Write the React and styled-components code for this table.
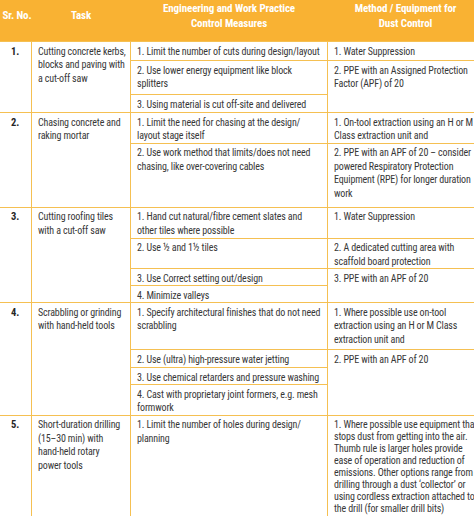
import styled, { createGlobalStyle } from 'styled-components';

const Global = createGlobalStyle`
  body {
    margin: 0;
    background: #fff;
    overflow: hidden;
  }
`;

// h = sub-row height as measured on the printed table
const rows = [
  {
    no: '1.',
    task: 'Cutting concrete kerbs,\nblocks and paving with\na cut-off saw',
    subs: [
      { h: 19, m: '1. Limit the number of cuts during design/layout', d: '1. Water Suppression' },
      { h: 34, m: '2. Use lower energy equipment like block\nsplitters', d: '2. PPE with an Assigned Protection\nFactor (APF) of 20', span: 2 },
      { h: 18, m: '3. Using material is cut off-site and delivered' },
    ],
  },
  {
    no: '2.',
    task: 'Chasing concrete and\nraking mortar',
    subs: [
      { h: 29, m: '1. Limit the need for chasing at the design/\nlayout stage itself', d: '1. On-tool extraction using an H or M\nClass extraction unit and' },
      { h: 64, m: '2. Use work method that limits/does not need\nchasing, like over-covering cables', d: '2. PPE with an APF of 20 – consider\npowered Respiratory Protection\nEquipment (RPE) for longer duration\nwork' },
    ],
  },
  {
    no: '3.',
    task: 'Cutting roofing tiles\nwith a cut-off saw',
    subs: [
      { h: 31, m: '1. Hand cut natural/fibre cement slates and\nother tiles where possible', d: '1. Water Suppression' },
      { h: 30, m: '2. Use ½ and 1½ tiles', d: '2. A dedicated cutting area with\nscaffold board protection' },
      { h: 17, m: '3. Use Correct setting out/design', d: '3. PPE with an APF of 20', span: 2 },
      { h: 17, m: '4. Minimize valleys' },
    ],
  },
  {
    no: '4.',
    task: 'Scrabbling or grinding\nwith hand-held tools',
    subs: [
      { h: 47, m: '1. Specify architectural finishes that do not need\nscrabbling', d: '1. Where possible use on-tool\nextraction using an H or M Class\nextraction unit and' },
      { h: 18, m: '2. Use (ultra) high-pressure water jetting', d: '2. PPE with an APF of 20', span: 3 },
      { h: 17, m: '3. Use chemical retarders and pressure washing' },
      { h: 30, m: '4. Cast with proprietary joint formers, e.g. mesh\nformwork' },
    ],
  },
  {
    no: '5.',
    task: 'Short-duration drilling\n(15–30 min) with\nhand-held rotary\npower tools',
    subs: [
      {
        h: 110,
        tight: true,
        m: '1. Limit the number of holes during design/\nplanning',
        d: "1. Where possible use equipment that\nstops dust from getting into the air.\nThumb rule is larger holes provide\nease of operation and reduction of\nemissions. Other options range from\ndrilling through a dust ‘collector’ or\nusing cordless extraction attached to\nthe drill (for smaller drill bits)",
      },
    ],
  },
];

const App = () => (
  <>
    <Global />
    <Table>
      <colgroup>
        <col style={{ width: 33 }} />
        <col style={{ width: 99 }} />
        <col style={{ width: 197 }} />
        <col style={{ width: 156 }} />
      </colgroup>
      <thead>
        <tr>
          <HeadCell>Sr. No.</HeadCell>
          <HeadCell>Task</HeadCell>
          <HeadCell>Engineering and Work Practice<br />Control Measures</HeadCell>
          <HeadCell>Method / Equipment for<br />Dust Control</HeadCell>
        </tr>
      </thead>
      <tbody>
        {rows.map(row =>
          row.subs.map((sub, i) => (
            <SubRow key={row.no + i} $h={sub.h}>
              {i === 0 && (
                <>
                  <NumCell rowSpan={row.subs.length}>{row.no}</NumCell>
                  <Cell rowSpan={row.subs.length}>{row.task}</Cell>
                </>
              )}
              <Cell>{sub.m}</Cell>
              {sub.d && (
                <Cell rowSpan={sub.span || 1} $tight={sub.tight}>
                  {sub.d}
                </Cell>
              )}
            </SubRow>
          ))
        )}
      </tbody>
    </Table>
  </>
);

export default App;

const Table = styled.table`
  border-collapse: collapse;
  table-layout: fixed;
  width: 485px;
  margin-left: -2px;
  font-family: "Roboto Condensed", Roboto, sans-serif;
  font-stretch: condensed;
  color: #383838;
  font-size: 10px;
  letter-spacing: -0.15px;
  line-height: 13.5px;
`;

const HeadCell = styled.th`
  background: #f9b233;
  color: #fff;
  font-weight: 700;
  font-size: 11px;
  letter-spacing: -0.1px;
  line-height: 15.5px;
  height: 32px;
  padding: 0 4px 9px;
  text-align: center;
  vertical-align: middle;
  white-space: nowrap;
  border-bottom: 1px solid #f5c052;
`;

const SubRow = styled.tr`
  height: ${p => p.$h}px;
`;

const Cell = styled.td`
  vertical-align: top;
  padding: ${p => (p.$tight ? '3.5px' : '2.5px')} 3px 0 6px;
  line-height: ${p => (p.$tight ? '12px' : 'inherit')};
  white-space: pre-line;
  border: 1px solid #f5c052;
`;

const NumCell = styled(Cell)`
  text-align: center;
  font-weight: 700;
  font-size: 10.5px;
  color: #262626;
  padding-left: 3px;
`;
